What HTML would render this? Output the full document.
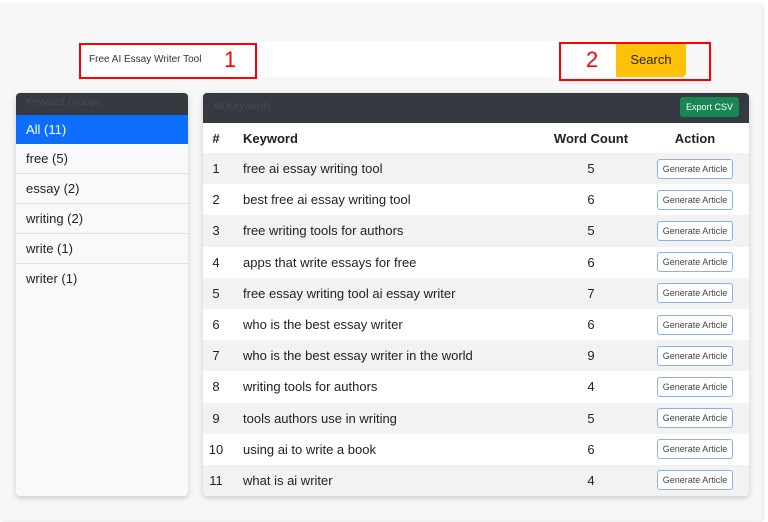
<!DOCTYPE html>
<html><head><style>
body{margin:0;width:768px;height:522px;background:#fff;font-family:"Liberation Sans",sans-serif;position:relative;overflow:hidden}
.page{position:absolute;left:0;top:4px;width:762px;height:516px;background:#f7f7f7;box-shadow:1px 1px 4px rgba(0,0,0,.12)}
.abs{position:absolute}
.input{left:79px;top:41px;width:607px;height:36px;background:#fff}
.btn{left:616px;top:42px;width:70px;height:35px;background:#ffc107;border-radius:0 4px 4px 0;font-size:13px;color:#222;text-align:center;line-height:35px}
.red{border:2px solid #f00;box-sizing:border-box}
.num{color:#f00;font-size:22px}
.left{left:16px;top:93px;width:172px;height:403px;background:#f8f9fa;border-radius:4px;box-shadow:0 2px 6px rgba(0,0,0,.18);overflow:hidden}
.hd{background:#343a40;color:#454c54;font-size:10px;padding-left:10px}
.item{height:29px;border-bottom:1px solid #e0e0e0;font-size:13px;color:#222;line-height:30px;padding-left:10px}
.right{left:203px;top:93px;width:546px;height:403px;background:#fff;border-radius:4px;box-shadow:0 2px 6px rgba(0,0,0,.18);overflow:hidden}
table{border-collapse:collapse;width:546px;font-size:13px;color:#222}
td,th{height:31.2px;padding:0}
th{font-weight:bold;height:30px}
tr.g{background:#f2f2f2}
.ga{display:inline-block;border:1px solid #8ab0ee;border-radius:3px;font-size:9px;color:#444;padding:4px 5px;background:#fff}
</style></head><body>
<div class="page">
</div>
<div class="abs input"></div>
<div class="abs" style="left:89px;top:54px;font-size:10px;color:#333">Free AI Essay Writer Tool</div>
<div class="abs red" style="left:79px;top:43px;width:178px;height:36px"></div>
<div class="abs num" style="left:224px;top:47px">1</div>
<div class="abs btn">Search</div>
<div class="abs red" style="left:559px;top:42px;width:152px;height:39px"></div>
<div class="abs num" style="left:586px;top:47px">2</div>
<div class="abs left">
<div class="hd" style="height:22px;line-height:20px">Keyword Groups</div>
<div class="item" style="background:#0d6efd;color:#fff;border:none;height:29px">All (11)</div>
<div class="item">free (5)</div>
<div class="item">essay (2)</div>
<div class="item">writing (2)</div>
<div class="item">write (1)</div>
<div class="item" style="border:none">writer (1)</div>
</div>
<div class="abs right">
<div class="hd" style="height:30px;line-height:28px;position:relative">All Keywords<span style="position:absolute;right:10px;top:4px;background:#198754;color:#fff;font-size:9px;line-height:20px;padding:0 6px;border-radius:3px">Export CSV</span></div>
<table>
<tr><th style="width:26px">#</th><th style="text-align:left;padding-left:14px">Keyword</th><th style="width:100px">Word Count</th><th style="width:108px">Action</th></tr>
<tr class="g"><td align=center>1</td><td style="padding-left:14px">free ai essay writing tool</td><td align=center>5</td><td align=center><span class="ga">Generate Article</span></td></tr>
<tr><td align=center>2</td><td style="padding-left:14px">best free ai essay writing tool</td><td align=center>6</td><td align=center><span class="ga">Generate Article</span></td></tr>
<tr class="g"><td align=center>3</td><td style="padding-left:14px">free writing tools for authors</td><td align=center>5</td><td align=center><span class="ga">Generate Article</span></td></tr>
<tr><td align=center>4</td><td style="padding-left:14px">apps that write essays for free</td><td align=center>6</td><td align=center><span class="ga">Generate Article</span></td></tr>
<tr class="g"><td align=center>5</td><td style="padding-left:14px">free essay writing tool ai essay writer</td><td align=center>7</td><td align=center><span class="ga">Generate Article</span></td></tr>
<tr><td align=center>6</td><td style="padding-left:14px">who is the best essay writer</td><td align=center>6</td><td align=center><span class="ga">Generate Article</span></td></tr>
<tr class="g"><td align=center>7</td><td style="padding-left:14px">who is the best essay writer in the world</td><td align=center>9</td><td align=center><span class="ga">Generate Article</span></td></tr>
<tr><td align=center>8</td><td style="padding-left:14px">writing tools for authors</td><td align=center>4</td><td align=center><span class="ga">Generate Article</span></td></tr>
<tr class="g"><td align=center>9</td><td style="padding-left:14px">tools authors use in writing</td><td align=center>5</td><td align=center><span class="ga">Generate Article</span></td></tr>
<tr><td align=center>10</td><td style="padding-left:14px">using ai to write a book</td><td align=center>6</td><td align=center><span class="ga">Generate Article</span></td></tr>
<tr class="g"><td align=center>11</td><td style="padding-left:14px">what is ai writer</td><td align=center>4</td><td align=center><span class="ga">Generate Article</span></td></tr>
</table>
</div>
</body></html>
